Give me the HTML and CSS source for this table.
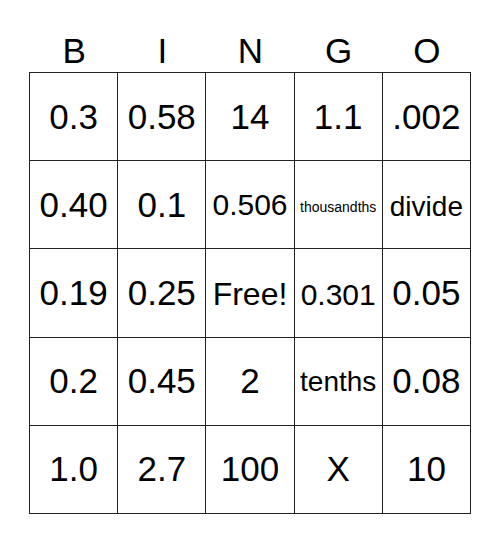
FILE: index.html
```html
<!DOCTYPE html>
<html>
<head>
<meta charset="utf-8">
<link rel="stylesheet" href="styles.css">
</head>
<body>
<div class="card">
  <div class="head">
    <div>B</div><div>I</div><div>N</div><div>G</div><div>O</div>
  </div>
  <div class="board">
    <div class="cell">0.3</div>
    <div class="cell">0.58</div>
    <div class="cell">14</div>
    <div class="cell">1.1</div>
    <div class="cell">.002</div>

    <div class="cell">0.40</div>
    <div class="cell">0.1</div>
    <div class="cell s30 p1">0.506</div>
    <div class="cell s14 p5">thousandths</div>
    <div class="cell s28 p4">divide</div>

    <div class="cell">0.19</div>
    <div class="cell">0.25</div>
    <div class="cell s32 p3">Free!</div>
    <div class="cell s30 p4">0.301</div>
    <div class="cell">0.05</div>

    <div class="cell">0.2</div>
    <div class="cell">0.45</div>
    <div class="cell">2</div>
    <div class="cell s28 p2">tenths</div>
    <div class="cell">0.08</div>

    <div class="cell">1.0</div>
    <div class="cell">2.7</div>
    <div class="cell">100</div>
    <div class="cell">X</div>
    <div class="cell">10</div>
  </div>
</div>
</body>
</html>
```
FILE: styles.css
```css
html, body {
  margin: 0;
  padding: 0;
  background: #fff;
}
body {
  font-family: "Liberation Sans", Arial, sans-serif;
  color: #000;
}
.card {
  width: 442px;
  padding-left: 29px;
}
.head {
  display: grid;
  grid-template-columns: repeat(5, 1fr);
  height: 72px;
  box-sizing: border-box;
  padding-top: 31px;
  padding-left: 1px;
  font-size: 35px;
  line-height: 40px;
  text-align: center;
}
.board {
  display: grid;
  grid-template-columns: repeat(5, 1fr);
  grid-auto-rows: 88.2px;
  border-top: 1px solid #222;
  border-left: 1px solid #222;
}
.cell {
  display: flex;
  align-items: center;
  justify-content: center;
  box-sizing: border-box;
  border-right: 1px solid #222;
  border-bottom: 1px solid #222;
  font-size: 35px;
  white-space: nowrap;
  overflow: hidden;
}
.s32 { font-size: 32px; }
.s30 { font-size: 30px; }
.s28 { font-size: 28px; }
.s14 { font-size: 14px; }
.p1 { padding-top: 1px; }
.p2 { padding-top: 2px; }
.p3 { padding-top: 3px; }
.p4 { padding-top: 4px; }
.p5 { padding-top: 5px; }
```
